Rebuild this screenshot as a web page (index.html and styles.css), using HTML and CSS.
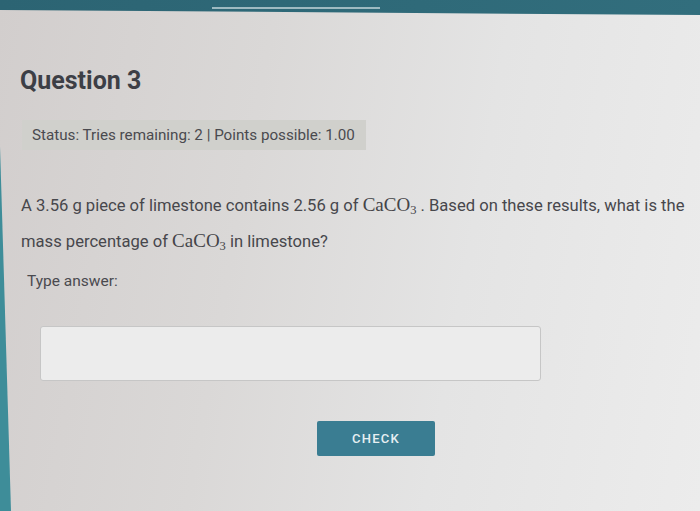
FILE: index.html
```html
<!DOCTYPE html>
<html lang="en">
<head>
<meta charset="utf-8">
<title>Question 3</title>
<link rel="stylesheet" href="styles.css">
</head>
<body>
<header class="topbar">
  <div class="tab-line"></div>
</header>
<div class="main">
  <div class="edge"></div>
  <section class="content">
    <h1 class="title">Question 3</h1>
    <div class="status">Status: Tries remaining: 2 | Points possible: 1.00</div>
    <p class="question">A 3.56 g piece of limestone contains 2.56 g of <span class="chem">CaCO<sub>3</sub></span> . Based on these results, what is the mass percentage of <span class="chem">CaCO<sub>3</sub></span> in limestone?</p>
    <div class="prompt">Type answer:</div>
    <input class="answer" type="text" aria-label="answer">
    <button class="check" type="button">CHECK</button>
  </section>
</div>
</body>
</html>
```

FILE: styles.css
```css
html, body {
  margin: 0;
  padding: 0;
  height: 100%;
}
body {
  font-family: Roboto, "Liberation Sans", Arial, sans-serif;
  background: linear-gradient(100deg, #d2cecd 0%, #dad8d7 35%, #e4e4e4 65%, #ececec 100%);
  color: #48484d;
  overflow: hidden;
}
.topbar {
  height: 16px;
  background: linear-gradient(90deg, #2c6473 0%, #2f6a79 60%, #326e7d 100%);
  clip-path: polygon(0 0, 100% 0, 100% 15px, 0 10px);
  display: flex;
}
.tab-line {
  margin-left: 212px;
  margin-top: 7px;
  width: 168px;
  height: 2px;
  background: #9ebac1;
}
.main {
  display: flex;
  min-height: calc(100vh - 16px);
}
.edge {
  flex: 0 0 12px;
  background: #3e8d99;
  clip-path: polygon(0 130px, 11px 100%, 0 100%);
}
.content {
  flex: 1;
  padding-left: 8px;
  display: flex;
  flex-direction: column;
  align-items: flex-start;
}
.title {
  margin: 50px 0 0 0;
  font-size: 25px;
  line-height: 30px;
  font-weight: 700;
  color: #3d3f46;
}
.status {
  margin: 24px 0 0 2px;
  height: 30px;
  line-height: 30px;
  padding: 0 11px 0 10px;
  background: #d0d0cc;
  font-size: 15.2px;
  color: #4a4a4f;
}
.question {
  margin: 38px 0 0 1px;
  font-size: 16.6px;
  line-height: 36px;
  width: 676px;
  color: #47474c;
}
.chem {
  font-family: "Liberation Serif", "Times New Roman", serif;
  font-size: 19px;
  line-height: 1;
  color: #444448;
}
.chem sub {
  font-size: 12.5px;
  vertical-align: -3px;
  line-height: 0;
}
.prompt {
  margin: 11px 0 0 7px;
  font-size: 15.5px;
  line-height: 20px;
  color: #4a4a4f;
}
.answer {
  margin: 35px 0 0 20px;
  width: 501px;
  height: 55px;
  box-sizing: border-box;
  border: 1px solid #c6c6c6;
  border-radius: 3px;
  background: #ececec;
  padding: 0 10px;
}
.check {
  margin: 40px 0 0 297px;
  width: 118px;
  height: 35px;
  border: none;
  border-radius: 2px;
  background: #3a7d92;
  color: #e6eff2;
  font-family: Roboto, "Liberation Sans", Arial, sans-serif;
  font-size: 13px;
  font-weight: 500;
  letter-spacing: 1.2px;
  padding: 0;
}
```
